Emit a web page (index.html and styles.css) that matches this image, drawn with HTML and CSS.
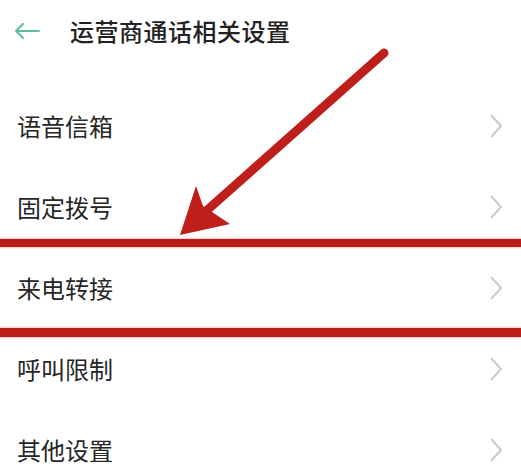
FILE: index.html
```html
<!DOCTYPE html>
<html lang="zh">
<head>
<meta charset="utf-8">
<link rel="stylesheet" href="styles.css">
</head>
<body>
<div class="page">
  <header class="bar">
    <svg class="back" width="26" height="16" viewBox="0 0 26 16">
      <path d="M25 8H2M9 1L2 8l7 7" fill="none" stroke="#5bbf9c" stroke-width="2" stroke-linecap="round" stroke-linejoin="round"/>
    </svg>
    <h1 class="title">运营商通话相关设置</h1>
  </header>
  <ul class="list">
    <li class="row"><span class="label">语音信箱</span><svg class="chev" width="12" height="24" viewBox="0 0 12 24"><path d="M1 1l10 11L1 23" fill="none" stroke="#cbcbcb" stroke-width="2"/></svg></li>
    <li class="row"><span class="label">固定拨号</span><svg class="chev" width="12" height="24" viewBox="0 0 12 24"><path d="M1 1l10 11L1 23" fill="none" stroke="#cbcbcb" stroke-width="2"/></svg></li>
    <li class="row"><span class="label">来电转接</span><svg class="chev" width="12" height="24" viewBox="0 0 12 24"><path d="M1 1l10 11L1 23" fill="none" stroke="#cbcbcb" stroke-width="2"/></svg></li>
    <li class="row"><span class="label">呼叫限制</span><svg class="chev" width="12" height="24" viewBox="0 0 12 24"><path d="M1 1l10 11L1 23" fill="none" stroke="#cbcbcb" stroke-width="2"/></svg></li>
    <li class="row"><span class="label">其他设置</span><svg class="chev" width="12" height="24" viewBox="0 0 12 24"><path d="M1 1l10 11L1 23" fill="none" stroke="#cbcbcb" stroke-width="2"/></svg></li>
  </ul>
  <div class="mark mark-top"></div>
  <div class="mark mark-bottom"></div>
  <svg class="arrow" width="521" height="472" viewBox="0 0 521 472">
    <line x1="384" y1="53" x2="205" y2="212" stroke="#bf1f1a" stroke-width="9" stroke-linecap="round"/>
    <polygon points="180,235 196,186 203,206 230,224" fill="#bf1f1a"/>
  </svg>
</div>
</body>
</html>
```
FILE: styles.css
```css
html, body {
  margin: 0;
  padding: 0;
  background: #ffffff;
}
.page {
  position: relative;
  width: 521px;
  height: 472px;
  overflow: hidden;
  font-family: "Noto Sans CJK SC", "Noto Sans", sans-serif;
  background: #ffffff;
}
.bar {
  display: flex;
  align-items: center;
  height: 64px;
  padding-left: 14px;
  box-sizing: border-box;
  padding-bottom: 2px;
}
.back {
  display: block;
}
.title {
  margin: 0 0 0 30px;
  font-size: 24px;
  font-weight: 500;
  color: #222222;
  letter-spacing: 0.5px;
  line-height: 1;
}
.list {
  list-style: none;
  margin: 0;
  padding: 0;
  margin-top: 21px;
}
.row {
  display: flex;
  align-items: center;
  justify-content: space-between;
  height: 81px;
  padding: 0 19px 0 17px;
}
.label {
  font-size: 24px;
  color: #262626;
  line-height: 1;
}
.chev {
  display: block;
}
.mark {
  position: absolute;
  left: 0;
  width: 521px;
  background: #b81d1a;
  box-shadow: 0 0 2px 1px rgba(230, 120, 110, 0.45);
}
.mark-top {
  top: 239px;
  height: 8px;
}
.mark-bottom {
  top: 328px;
  height: 9px;
}
.arrow {
  position: absolute;
  left: 0;
  top: 0;
}
```
